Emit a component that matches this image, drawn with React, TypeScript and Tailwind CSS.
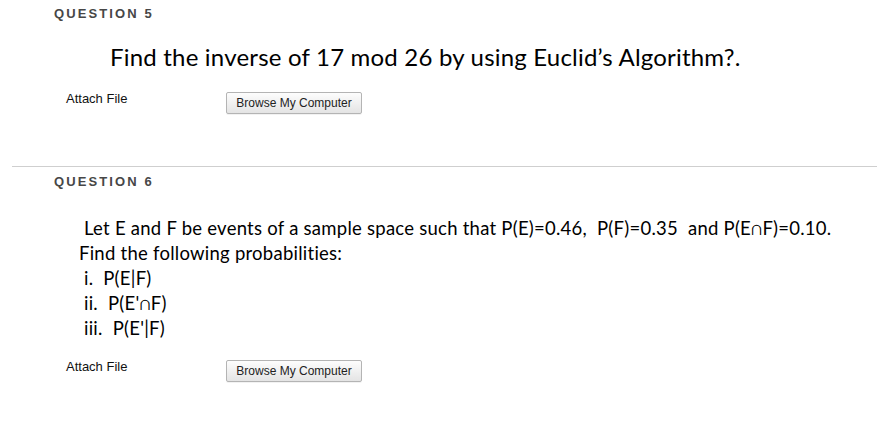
import React from "react";

const Browse = () => (
  <button
    type="button"
    className="h-[22px] w-[136px] rounded-[2px] border border-[#b4b4b4] bg-gradient-to-b from-[#fdfdfd] to-[#e4e4e4] text-[12px] leading-none text-[#222] [font-family:'Liberation_Sans',Arial,sans-serif] shadow-[0_1px_0_rgba(0,0,0,0.05)]"
  >
    Browse My Computer
  </button>
);

const Header = ({ n }: { n: number }) => (
  <div className="pl-[54px] text-[13px] font-bold leading-[16px] tracking-[2.1px] text-[#474747] [font-family:'Liberation_Sans',Arial,sans-serif]">
    QUESTION {n}
  </div>
);

const AttachRow = () => (
  <div className="flex items-start">
    <div className="w-[226px] pl-[66px] text-[13px] leading-[14px] text-[#111] [font-family:'Liberation_Sans',Arial,sans-serif]">
      Attach File
    </div>
    <Browse />
  </div>
);

export default function App() {
  return (
    <div className="w-[877px] h-[433px] bg-white overflow-hidden">
      <div className="pt-[6px]">
        <Header n={5} />
      </div>
      <div className="pl-[110px] pt-[21px] text-[24px] leading-[28px] tracking-[0.2px] text-black [font-family:Lato,'Open_Sans',sans-serif]">
        Find the inverse of 17 mod 26 by using Euclid’s Algorithm?.
      </div>
      <div className="pt-[21px]">
        <AttachRow />
      </div>
      <div className="ml-[12px] mt-[52px] border-t border-[#cfcfcf]" />
      <div className="pt-[7px]">
        <Header n={6} />
      </div>
      <div className="pl-[79px] pt-[26px] text-[18.5px] leading-[25px] tracking-[0.25px] text-black [font-family:Lato,'Open_Sans',sans-serif]">
        <div className="whitespace-pre">{" Let E and F be events of a sample space such that P(E)=0.46,  P(F)=0.35  and P(E∩F)=0.10."}</div>
        <div>Find the following probabilities:</div>
        <div className="whitespace-pre">{" i.  P(E|F)"}</div>
        <div className="whitespace-pre">{" ii.  P(E'∩F)"}</div>
        <div className="whitespace-pre">{" iii.  P(E'|F)"}</div>
      </div>
      <div className="pt-[19px]">
        <AttachRow />
      </div>
    </div>
  );
}
